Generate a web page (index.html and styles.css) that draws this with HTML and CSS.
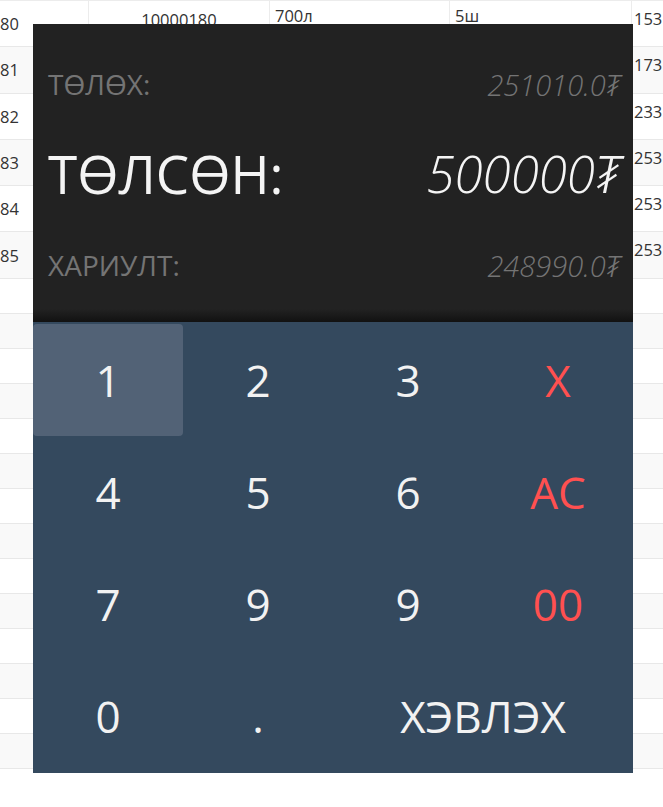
FILE: index.html
```html
<!DOCTYPE html>
<html lang="mn">
<head>
<meta charset="utf-8">
<title>Төлбөр</title>
<link rel="stylesheet" href="styles.css">
</head>
<body>
<div class="sheet">
  <div class="row tall"><div class="c c0">80</div><div class="c c1">10000180</div><div class="c c2">700л</div><div class="c c3">5ш</div><div class="c c4">153</div></div>
  <div class="row tall alt"><div class="c c0">81</div><div class="c c1"></div><div class="c c2"></div><div class="c c3"></div><div class="c c4">173</div></div>
  <div class="row tall"><div class="c c0">82</div><div class="c c1"></div><div class="c c2"></div><div class="c c3"></div><div class="c c4">233</div></div>
  <div class="row tall alt"><div class="c c0">83</div><div class="c c1"></div><div class="c c2"></div><div class="c c3"></div><div class="c c4">253</div></div>
  <div class="row tall"><div class="c c0">84</div><div class="c c1"></div><div class="c c2"></div><div class="c c3"></div><div class="c c4">253</div></div>
  <div class="row tall alt"><div class="c c0">85</div><div class="c c1"></div><div class="c c2"></div><div class="c c3"></div><div class="c c4">253</div></div>
  <div class="row"><div class="c c0"></div><div class="c c1"></div><div class="c c2"></div><div class="c c3"></div><div class="c c4"></div></div>
  <div class="row alt"><div class="c c0"></div><div class="c c1"></div><div class="c c2"></div><div class="c c3"></div><div class="c c4"></div></div>
  <div class="row"><div class="c c0"></div><div class="c c1"></div><div class="c c2"></div><div class="c c3"></div><div class="c c4"></div></div>
  <div class="row alt"><div class="c c0"></div><div class="c c1"></div><div class="c c2"></div><div class="c c3"></div><div class="c c4"></div></div>
  <div class="row"><div class="c c0"></div><div class="c c1"></div><div class="c c2"></div><div class="c c3"></div><div class="c c4"></div></div>
  <div class="row alt"><div class="c c0"></div><div class="c c1"></div><div class="c c2"></div><div class="c c3"></div><div class="c c4"></div></div>
  <div class="row"><div class="c c0"></div><div class="c c1"></div><div class="c c2"></div><div class="c c3"></div><div class="c c4"></div></div>
  <div class="row alt"><div class="c c0"></div><div class="c c1"></div><div class="c c2"></div><div class="c c3"></div><div class="c c4"></div></div>
  <div class="row"><div class="c c0"></div><div class="c c1"></div><div class="c c2"></div><div class="c c3"></div><div class="c c4"></div></div>
  <div class="row alt"><div class="c c0"></div><div class="c c1"></div><div class="c c2"></div><div class="c c3"></div><div class="c c4"></div></div>
  <div class="row"><div class="c c0"></div><div class="c c1"></div><div class="c c2"></div><div class="c c3"></div><div class="c c4"></div></div>
  <div class="row alt"><div class="c c0"></div><div class="c c1"></div><div class="c c2"></div><div class="c c3"></div><div class="c c4"></div></div>
  <div class="row"><div class="c c0"></div><div class="c c1"></div><div class="c c2"></div><div class="c c3"></div><div class="c c4"></div></div>
  <div class="row alt"><div class="c c0"></div><div class="c c1"></div><div class="c c2"></div><div class="c c3"></div><div class="c c4"></div></div>
</div>

<div class="pay">
  <div class="summary">
    <div class="line line-due"><span class="lbl">ТӨЛӨХ:</span><span class="amt">251010.0₮</span></div>
    <div class="line line-paid"><span class="lbl">ТӨЛСӨН:</span><span class="amt">500000₮</span></div>
    <div class="line line-change"><span class="lbl">ХАРИУЛТ:</span><span class="amt">248990.0₮</span></div>
  </div>
  <div class="keypad">
    <button class="key active">1</button>
    <button class="key">2</button>
    <button class="key">3</button>
    <button class="key red">X</button>
    <button class="key">4</button>
    <button class="key">5</button>
    <button class="key">6</button>
    <button class="key red">AC</button>
    <button class="key">7</button>
    <button class="key">9</button>
    <button class="key">9</button>
    <button class="key red">00</button>
    <button class="key">0</button>
    <button class="key">.</button>
    <button class="key wide">ХЭВЛЭХ</button>
  </div>
</div>
</body>
</html>
```

FILE: styles.css
```css
html, body {
  margin: 0;
  padding: 0;
  background: #ffffff;
  font-family: "Open Sans", "Noto Sans", sans-serif;
  overflow: hidden;
}

.sheet {
  border-top: 1px solid #ececec;
}

.row {
  display: grid;
  grid-template-columns: 88px 181px 180px 182px 1fr;
  height: 35px;
  border-bottom: 1px solid #e8e8e8;
  box-sizing: border-box;
  background: #ffffff;
}
.row.tall { height: 46.3px; }
.row.alt { background: #f9f9f9; }

.c {
  font-size: 16.5px;
  color: #333333;
  border-left: 1px solid #ececec;
  padding: 3px 4px 0 4px;
  white-space: nowrap;
  overflow: hidden;
}
.c0 {
  border-left: none;
  padding: 0;
  display: flex;
  align-items: center;
}
.c1 {
  text-align: center;
  padding: 7px 0 0 0;
}
.c2, .c3 { padding-left: 5px; }
.c4 { padding-left: 2px; padding-top: 6px; }

.pay {
  position: absolute;
  left: 33px;
  top: 24px;
  width: 600px;
}

.summary {
  background: linear-gradient(to bottom, #222222 0, #222222 285px, #181818 293px, #111111 298px);
  height: 298px;
  box-sizing: border-box;
  padding: 36px 13px 0 15px;
  display: flex;
  flex-direction: column;
}

.line {
  display: flex;
  justify-content: space-between;
  align-items: center;
  color: #747474;
  font-size: 28px;
  font-weight: 400;
}
.line-due { height: 48px; }
.line-paid {
  height: 130px;
  color: #f4f4f4;
  font-size: 53px;
  font-weight: 400;
}
.line-paid .amt {
  font-size: 51px;
  font-weight: 300;
}
.line-change { height: 54px; }

.amt {
  font-style: italic;
  font-weight: 300;
  font-size: 29px;
}

.keypad {
  background: #34495e;
  height: 451px;
  box-sizing: border-box;
  padding-top: 2px;
  display: grid;
  grid-template-columns: repeat(4, 150px);
  grid-template-rows: repeat(4, 112px);
}

.key {
  border: none;
  background: transparent;
  color: #f2f2f2;
  font-family: "Open Sans", "Noto Sans", sans-serif;
  font-size: 44px;
  font-weight: 400;
  padding: 0;
  margin: 0;
  border-radius: 4px;
  display: flex;
  align-items: center;
  justify-content: center;
}
.key.active { background: #526276; }
.key.red { color: #ff5050; }
.key.wide { grid-column: span 2; }
```
